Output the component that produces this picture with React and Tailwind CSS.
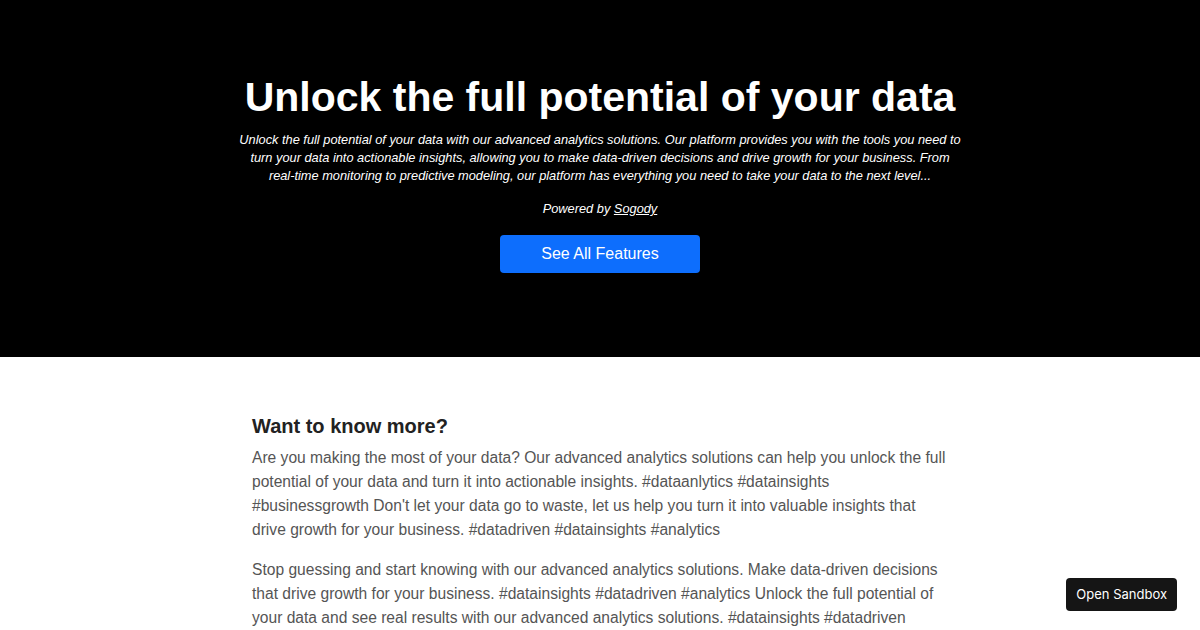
export default function App() {
  return (
    <div className="min-h-screen bg-white" style={{ fontFamily: '"Liberation Sans", Arial, sans-serif' }}>
      {/* Hero */}
      <section className="bg-black text-white h-[357px] flex flex-col items-center pt-[70px]">
        <h1 className="text-[41px] leading-[54px] font-bold">
          Unlock the full potential of your data
        </h1>
        <p className="mt-[7px] w-[724px] text-center text-[12.8px] leading-[18px] italic">
          Unlock the full potential of your data with our advanced analytics solutions. Our platform provides you with the tools you need to turn your data into actionable insights, allowing you to make data-driven decisions and drive growth for your business. From real-time monitoring to predictive modeling, our platform has everything you need to take your data to the next level...
        </p>
        <p className="mt-[15px] text-[12.8px] leading-[18px] italic">
          Powered by <a className="underline">Sogody</a>
        </p>
        <button
          type="button"
          className="mt-[17px] w-[200px] h-[38px] rounded-[4px] bg-[#0d6efd] text-white text-[16px]"
        >
          See All Features
        </button>
      </section>

      {/* Info */}
      <section className="flex justify-center pt-[54px]">
        <div className="w-[696px]">
          <h2 className="text-[20px] leading-[30px] font-bold text-[#222]">Want to know more?</h2>
          <p className="mt-[5px] text-[15.6px] leading-[24px] text-[#555]">
            Are you making the most of your data? Our advanced analytics solutions can help you unlock the full potential of your data and turn it into actionable insights. #dataanlytics #datainsights #businessgrowth Don't let your data go to waste, let us help you turn it into valuable insights that drive growth for your business. #datadriven #datainsights #analytics
          </p>
          <p className="mt-[16px] text-[15.6px] leading-[24px] text-[#555]">
            Stop guessing and start knowing with our advanced analytics solutions. Make data-driven decisions that drive growth for your business. #datainsights #datadriven #analytics Unlock the full potential of your data and see real results with our advanced analytics solutions. #datainsights #datadriven #analytics
          </p>
        </div>
      </section>

      <button
        type="button"
        className="fixed right-[23px] bottom-[19px] h-[33px] px-[10px] rounded-[4px] bg-[#151515] text-white text-[13px]"
        style={{ fontFamily: 'Inter, "Liberation Sans", sans-serif' }}
      >
        Open Sandbox
      </button>
    </div>
  );
}
